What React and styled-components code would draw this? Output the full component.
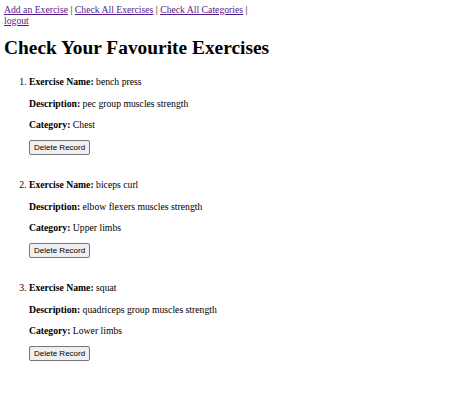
import styled, { createGlobalStyle } from 'styled-components';

const GlobalStyle = createGlobalStyle`
    body {
        margin: 4px;
        background: #ffffff;
        color: #000000;
        font-family: "Liberation Serif", "Times New Roman", serif;
        font-size: 9.7px;
    }
`;

const Nav = styled.nav`
    width: 252px;
    line-height: 11px;
    color: #000000;
`;

const NavLink = styled.a`
    color: #551a8b;
    text-decoration: underline;
    cursor: pointer;
`;

const Title = styled.h1`
    margin: 10px 0 15px;
    font-size: 19.4px;
    line-height: 24px;
    font-weight: bold;
`;

const List = styled.ol`
    margin: 0;
    padding-left: 25px;
`;

const Item = styled.li`
    margin-bottom: 23px;
    line-height: 13px;
`;

const Field = styled.p`
    margin: 8.5px 0 0;
`;

const Label = styled.strong`
    font-weight: bold;
`;

const DeleteButton = styled.button`
    margin-top: 9px;
    padding: 2px 4px;
    font-family: "Liberation Sans", Arial, sans-serif;
    font-size: 8px;
    line-height: 9px;
    color: #000000;
    background: #efefef;
    border: 1px solid #767676;
    border-radius: 2px;
`;

const exercises = [
    { id: 1, name: 'bench press', description: 'pec group muscles strength', category: 'Chest' },
    { id: 2, name: 'biceps curl', description: 'elbow flexers muscles strength', category: 'Upper limbs' },
    { id: 3, name: 'squat', description: 'quadriceps group muscles strength', category: 'Lower limbs' },
];

export default function App() {
    return (
        <>
            <GlobalStyle />
            <Nav>
                <NavLink>Add an Exercise</NavLink> | <NavLink>Check All Exercises</NavLink> |{' '}
                <NavLink>Check All Categories</NavLink> | <NavLink>logout</NavLink>
            </Nav>
            <Title>Check Your Favourite Exercises</Title>
            <List>
                {exercises.map((ex) => (
                    <Item key={ex.id}>
                        <Label>Exercise Name:</Label> {ex.name}
                        <Field>
                            <Label>Description:</Label> {ex.description}
                        </Field>
                        <Field>
                            <Label>Category:</Label> {ex.category}
                        </Field>
                        <DeleteButton>Delete Record</DeleteButton>
                    </Item>
                ))}
            </List>
        </>
    );
}
